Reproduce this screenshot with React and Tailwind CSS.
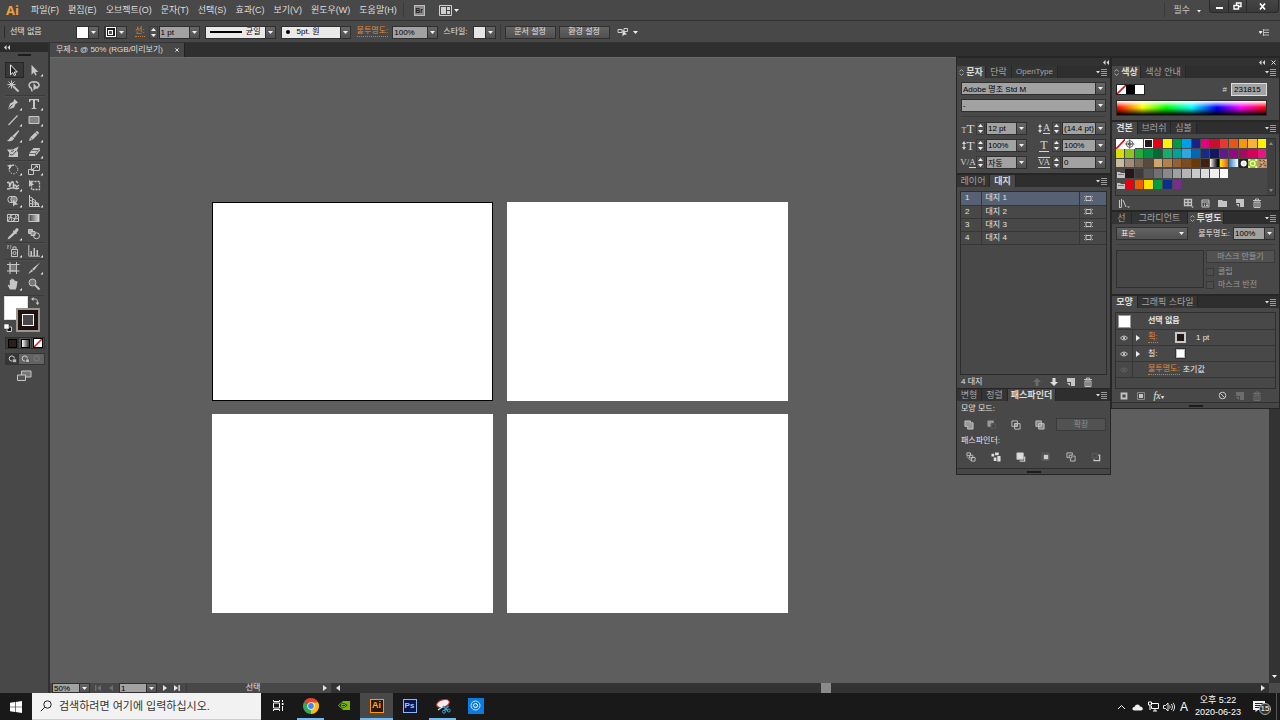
import React from "react";

const FONT = "font-['Liberation_Sans','Noto_Sans_CJK_KR',sans-serif]";

/* ---------- small building blocks ---------- */

function Svg({ w = 12, h = 12, box = "0 0 12 12", className = "", children }) {
  return (
    <svg width={w} height={h} viewBox={box} className={`shrink-0 ${className}`} fill="none" stroke="currentColor" strokeWidth="1" aria-hidden="true">
      {children}
    </svg>
  );
}

function Caret() {
  return (
    <svg width="5" height="3" viewBox="0 0 5 3" className="shrink-0" aria-hidden="true">
      <path d="M0 0h5L2.5 3z" fill="#f0f0f0" />
    </svg>
  );
}

function ArrowButton({ label }) {
  return (
    <button aria-label={label} className="flex w-[10px] shrink-0 items-center justify-center self-stretch border-l border-[#2f2f2f] bg-gradient-to-b from-[#666] to-[#505050]">
      <Caret />
    </button>
  );
}

function Combo({ label, value, width, spinner = false, tall = "h-[13px]" }) {
  return (
    <span className={`flex items-center gap-px ${width}`}>
      {spinner && (
        <button aria-label={`${label} 증감`} className={`flex w-[9px] shrink-0 flex-col items-center justify-center gap-[3px] border border-[#3a3a3a] bg-[#505050] ${tall}`}>
          <svg width="5" height="9" viewBox="0 0 5 9" aria-hidden="true">
            <path d="M0 3L2.5 0L5 3zM0 6L2.5 9L5 6z" fill="#eee" />
          </svg>
        </button>
      )}
      <span className={`flex min-w-0 flex-1 border border-[#2f2f2f] ${tall}`}>
        <input aria-label={label} defaultValue={value} className="min-w-0 flex-1 bg-[#a2a2a2] px-px text-[8px] leading-none text-black outline-none" />
        <ArrowButton label={`${label} 목록`} />
      </span>
    </span>
  );
}

function Tab({ children, active, width, grip }) {
  return (
    <button className={`flex items-center justify-center gap-[2px] whitespace-nowrap border-r border-[#262626] text-[9px] leading-none ${width} ${active ? "bg-[#484848] font-bold text-[#dcdcdc]" : "bg-[#343434] text-[#a4a4a4]"}`}>
      {grip && (
        <svg width="5" height="7" viewBox="0 0 5 7" fill="none" stroke="#c0c0c0" strokeWidth=".8" aria-hidden="true">
          <path d="M.5 2.400L2.500.6L4.500 2.400M.5 4.600L2.500 6.400L4.500 4.600" />
        </svg>
      )}
      {children}
    </button>
  );
}

function TabStrip({ children }) {
  return (
    <div className="flex h-[12px] items-stretch bg-[#2e2e2e]">
      {children}
      <button aria-label="패널 메뉴" className="ml-auto flex items-center pr-[3px] text-[#b5b5b5]">
        <Svg w={11} h={7} box="0 0 11 7">
          <path d="M0 2h4L2 4.500z" fill="#ddd" stroke="none" />
          <path d="M5 .5h6M5 2.500h6M5 4.500h6M5 6.500h6" stroke="#999" />
        </Svg>
      </button>
    </div>
  );
}

function Grip() {
  return (
    <div className="flex h-[6px] items-center justify-center border-t border-[#303030] bg-[#464646]">
      <span className="h-[2px] w-[14px] bg-[#1c1c1c]" />
    </div>
  );
}

function IconButton({ label, dim, width = "w-[17px]", children }) {
  return (
    <button aria-label={label} className={`flex shrink-0 items-center justify-center ${width} ${dim ? "text-[#6c6c6c]" : "text-[#c4c4c4]"}`}>
      {children}
    </button>
  );
}

function ChevronsLeft() {
  return (
    <svg width="6" height="5" viewBox="0 0 6 5" aria-hidden="true">
      <path d="M2.500 0v5L0 2.500zM6 0v5L3.500 2.500z" fill="#d8d8d8" />
    </svg>
  );
}

const NewIcon = () => (
  <Svg w={10} h={10} box="0 0 10 10">
    <path d="M1 1h8v8H5V5H1z" fill="currentColor" stroke="none" />
    <path d="M1 6h3v3z" fill="currentColor" stroke="none" />
  </Svg>
);
const TrashIcon = () => (
  <Svg w={10} h={10} box="0 0 10 10">
    <path d="M1 2.500h8M3.500 2V1h3v1M2 4h6v5.500H2zM4 4v5M6 4v5" />
  </Svg>
);
const NoneIcon = ({ size = "h-[9px] w-[9px]" }) => (
  <svg viewBox="0 0 9 9" preserveAspectRatio="none" className={`block shrink-0 bg-white ${size}`} aria-hidden="true">
    <path d="M0 9L9 0" stroke="#d8141c" strokeWidth="1.600" />
  </svg>
);

/* ---------- top bars ---------- */

const MENUS = ["파일(F)", "편집(E)", "오브젝트(O)", "문자(T)", "선택(S)", "효과(C)", "보기(V)", "윈도우(W)", "도움말(H)"];

function MenuBar() {
  return (
    <header className="flex h-[21px] shrink-0 items-center border-b border-[#333] bg-[#484848]">
      <span className="w-[31px] pl-[6px] font-['Open_Sans',sans-serif] text-[13px] font-bold leading-none text-[#f0a03c]">Ai</span>
      <nav className="flex gap-[9px]">
        {MENUS.map((m) => (
          <button key={m} className="whitespace-nowrap text-[9px] leading-none text-[#dedede]">{m}</button>
        ))}
      </nav>
      <span className="ml-[6px] h-[14px] w-px bg-[#3a3a3a]" />
      <button aria-label="Bridge" className="ml-[10px] flex h-[11px] w-[11px] items-center justify-center border border-[#bdbdbd] bg-[#8a8a8a] text-[7px] font-bold leading-none text-[#1c1c1c]">Br</button>
      <button aria-label="문서 정렬" className="ml-[14px] flex items-center gap-[2px] text-[#d0d0d0]">
        <Svg w={13} h={11} box="0 0 13 11">
          <path d="M.5.5h12v10H.5z" />
          <path d="M2 2h5v7H2zM8 2h3v3H8zM8 6h3v3H8z" fill="currentColor" stroke="none" />
        </Svg>
        <Caret />
      </button>
      <span className="ml-auto h-[14px] w-px bg-[#3a3a3a]" />
      <button className="ml-[8px] flex items-center gap-[7px] text-[9px] leading-none text-[#c4c4c4]">
        필수
        <Svg w={4} h={3} box="0 0 4 3" className="mt-[3px]"><path d="M0 0h4L2 2.500z" fill="#eee" stroke="none" /></Svg>
      </button>
      <div className="ml-[8px] mr-px flex h-[13px] self-start rounded-b-sm border border-t-0 border-[#2a2a2a] bg-gradient-to-b from-[#454545] to-[#3a3a3a] text-white">
        <button aria-label="최소화" className="flex w-[19px] items-center justify-center border-r border-[#2a2a2a]">
          <span className="mt-[3px] h-[2px] w-[7px] bg-white" />
        </button>
        <button aria-label="이전 크기로" className="flex w-[18px] items-center justify-center border-r border-[#2a2a2a]">
          <Svg w={9} h={8} box="0 0 9 8"><path d="M3.500 3V1h4.500v3.500H6M1 3.500h4.500V7H1z" strokeWidth="1.400" /></Svg>
        </button>
        <button aria-label="닫기" className="flex w-[31px] items-center justify-center">
          <Svg w={7} h={7} box="0 0 7 7"><path d="M1 .5l5 6M6 .5l-5 6" strokeWidth="1.700" /></Svg>
        </button>
      </div>
    </header>
  );
}

function SwatchButton({ label, stroke, light }) {
  return (
    <span className="flex h-[13px] w-[23px] shrink-0 border border-[#2f2f2f]">
      <button aria-label={label} className={`flex flex-1 items-center justify-center ${stroke ? "bg-[#3a3a3a]" : light ? "bg-[#e6e6e6]" : "bg-white"}`}>
        {stroke && (
          <span className="flex h-[10px] w-[10px] items-center justify-center border border-white bg-[#231815]">
            <span className="h-[5px] w-[5px] border border-white bg-[#555]" />
          </span>
        )}
      </button>
      <ArrowButton label={`${label} 목록`} />
    </span>
  );
}

const ORANGE = "border-b border-dotted border-[#c9813a] pb-px text-[8px] leading-none text-[#e08a3a] whitespace-nowrap";

function ControlBar() {
  return (
    <div className="flex h-[22px] shrink-0 items-center border-b border-[#333] bg-[#484848] pt-px text-[8px] leading-none text-[#e2e2e2]">
      <span className="ml-[4px] h-[12px] w-px bg-[#2c2c2c]" />
      <span className="ml-[5px] w-[66px] whitespace-nowrap">선택 없음</span>
      <SwatchButton label="칠" />
      <span className="w-[5px]" />
      <SwatchButton label="획" stroke />
      <button className={`ml-[8px] ${ORANGE}`}>선:</button>
      <span className="w-[4px]" />
      <Combo label="선 두께" value="1 pt" width="w-[51px]" spinner />
      <span className="ml-[5px] flex h-[13px] w-[71px] border border-[#2f2f2f]">
        <button aria-label="폭 프로필" className="flex flex-1 items-center gap-[4px] bg-[#e9e9e9] px-[4px] text-black">
          <span className="h-[2px] flex-1 bg-black" />
          <span>균일</span>
        </button>
        <ArrowButton label="폭 프로필 목록" />
      </span>
      <span className="ml-[5px] flex h-[13px] w-[70px] border border-[#2f2f2f]">
        <button aria-label="브러쉬 정의" className="flex flex-1 items-center gap-[7px] bg-[#e9e9e9] px-[4px] text-black">
          <span className="h-[4px] w-[4px] rounded-full bg-black" />
          <span>5pt. 원</span>
        </button>
        <ArrowButton label="브러쉬 목록" />
      </span>
      <button className={`ml-[6px] ${ORANGE}`}>불투명도:</button>
      <span className="w-[4px]" />
      <Combo label="불투명도" value="100%" width="w-[46px]" />
      <span className="mx-[5px] whitespace-nowrap">스타일:</span>
      <SwatchButton label="스타일" light />
      <span className="ml-[4px] h-[16px] w-px bg-[#3a3a3a]" />
      <button className="ml-[4px] h-[13px] w-[51px] border border-[#303030] bg-gradient-to-b from-[#646464] to-[#505050]">문서 설정</button>
      <button className="ml-[3px] h-[13px] w-[51px] border border-[#303030] bg-gradient-to-b from-[#646464] to-[#505050]">환경 설정</button>
      <button aria-label="유사 오브젝트 선택" className="ml-[7px] flex items-center gap-[4px] text-[#cfcfcf]">
        <Svg w={12} h={10} box="0 0 12 10">
          <path d="M1 2.500h4v3H1zM7 1.500h3.500v3H7z" />
          <path d="M5.500 2.500v7l1.700-1.700 2.800-.3z" fill="#ddd" stroke="none" />
        </Svg>
        <Caret />
      </button>
      <button aria-label="컨트롤 메뉴" className="ml-auto mr-[11px]">
        <Svg w={10} h={7} box="0 0 10 7">
          <path d="M0 2.500h3L1.500 4.500z" fill="#ddd" />
          <path d="M4.500 0v7M4 1h6M4 3.500h6M4 6h6" stroke="#bbb" />
        </Svg>
      </button>
    </div>
  );
}

/* ---------- tools ---------- */

const F = { fill: "currentColor", stroke: "none" };
const TOOLS = [
  [
    ["선택", <path key="a" d="M3.500.8v10l2.300-2.200 1.500 3 1.400-.7-1.400-2.900h3z" fill="#222" stroke="#e8e8e8" />, false],
    ["직접 선택", <path key="a" d="M3.500.8v10l2.300-2.200 1.500 3 1.400-.7-1.400-2.900h3z" {...F} />, true],
    ["자동 선택", <g key="a"><path d="M6 6l5.500 5.500" strokeWidth="2" /><path d="M4.500.5v8M.5 4.500h8M1.500 1.500l6 6M7.500 1.500l-6 6" /></g>, false],
    ["올가미", <g key="a"><path d="M3.500 8C0 7 0 2 6 1.800c5.500 0 6.500 4.500 3 5.700M3.500 7.500c-1 1.500 1 2 .2 4" strokeWidth="1.500" /><path d="M5.500 3v7.500l2-1.800 2.800-.2z" {...F} /></g>, false],
  ],
  [
    ["펜", <g key="a"><path d="M7.500 1l3.500 3.500-2.500 1.500-1.500 3.500-6 2 2-6L6.300 3.700z" {...F} /><path d="M1.500 11L5.500 6.500" stroke="#444" /></g>, true],
    ["문자", <path key="a" d="M1 1h10v3H9.800L9.400 2.200H7v7.600l1.400.5v.7H3.600v-.7L5 9.800V2.200H2.600L2.200 4H1z" {...F} />, true],
    ["선분", <path key="a" d="M1.500 11L10.500 1.500" strokeWidth="1.200" />, true],
    ["사각형", <path key="a" d="M1 2.500h10v7H1z" fill="#858585" />, true],
    ["페인트브러쉬", <path key="a" d="M11.500.2L12.300 1 7.500 7.700 5.300 6zM4.800 6.300l2.400 2C6 11.300 2.500 11.800 0 10.700 2.500 10 2.700 7.300 4.800 6.300z" {...F} />, true],
    ["연필", <g key="a"><path d="M9 .8l2.200 2.200-6.500 6.800L1 11l1-3.500z" {...F} /><path d="M2.200 7.600l2.300 2.200M7.500 2.300l2.200 2.200" stroke="#444" strokeWidth=".8" /></g>, true],
    ["물방울 브러쉬", <g key="a"><path d="M0 3.500h5.500L11.800.5 9.500 5.500H11V11H1.500L2.500 7z" {...F} /><path d="M3 8.500c2.500 1 4-.5 6-3.500M4 5c1 1 2 0 3-1" stroke="#444" /></g>, false],
    ["지우개", <g key="a"><path d="M5.500 2H12v2.500L7.500 10H1V7.500z" {...F} /><path d="M1 7.500h6.500L12 2.500M7.500 7.500V10M4 4.500h6" stroke="#555" strokeWidth=".8" /></g>, true],
  ],
  [
    ["회전", <g key="a"><circle cx="6.500" cy="6.500" r="4.300" strokeDasharray="1.500 1.200" /><path d="M2.200 6.500A4.300 4.300 0 0 1 7 2.200" strokeWidth="1.300" /><path d="M0 2.500l4-1v4z" {...F} /></g>, true],
    ["크기 조절", <g key="a"><path d="M3.500 1.500h8v6h-8zM.5 6.500h5v5h-5z" /><path d="M5 6l4-3M7 3h2.500v2" /></g>, true],
    ["폭", <path key="a" d="M0 4c2-2 3 1 2.500 4C4 5 4 2 6 3c1 1 0 3 .5 5C8 5 9 6 9.500 8L12 6M0 10c4 0 5-2 7-1s3 1 5 0M9 2l2 2" strokeWidth="1.500" />, true],
    ["자유 변형", <g key="a"><rect x="3.500" y="2.500" width="8" height="8" strokeDasharray="2 1" strokeWidth="1.300" /><path d="M1 .5v7.500l2-1.800 3-.2z" {...F} /></g>, false],
    ["도형 구성", <g key="a"><circle cx="4" cy="4.500" r="3.200" /><circle cx="7" cy="4.500" r="3.200" fill="#888" /><path d="M6 4.500v7l2-1.800 3-.2z" {...F} /></g>, true],
    ["원근감 격자", <path key="a" d="M1.500 0v11.500H12M1.500 2l3 1v8M4.500 4l3 1.500v6M7.500 7l3 1.500v3M1.500 5l9 4M1.500 8.500l9 1" />, true],
  ],
  [
    ["망", <path key="a" d="M.5 2.500h11v7H.5zM.5 6c3-3 7 3 11 0M4 2.500c-2 3 2 4 0 7M8 2.500c2 3-2 4 0 7M1 9l4-6M6 9l5-6" />, false],
    ["그라디언트", <rect key="a" x="1" y="2.500" width="10" height="7" fill="url(#toolGrad)" />, false],
    ["스포이드", <path key="a" d="M9 .5c2-1 3.500 1 2 2.500L9.500 4.500l.5.8-1 1-.7-.6L3 10.500l-2.500 1 1-2.500L6.500 3.900l-.7-.7 1-1 .8.600z" {...F} />, true],
    ["블렌드", <g key="a"><path d="M.5 1.500h4v4h-4z" fill="#aaa" /><path d="M3 3.500h4v4H3z" fill="#888" /><circle cx="8.500" cy="7.800" r="3" /></g>, false],
  ],
  [
    ["심볼 분무기", <g key="a"><path d="M4.500 4.500h6v7h-6zM6 4V2h3v2" /><circle cx="7.500" cy="8" r="1.500" /><path d="M0 1h2M3 1h1.500M0 3h1.500M3 3h1" /></g>, true],
    ["그래프", <path key="a" d="M.8 0v11.200H12" />, true],
  ],
  [
    ["대지", <g key="a"><path d="M3 2.500h6.500V9H3z" fill="#777" /><path d="M3 0v12M9.500 0v12M0 2.500h12.500M0 9h12.500" /></g>, false],
    ["분할 영역", <path key="a" d="M12 .5L6 8.500 4 7zM3.500 7.500l1.800 1.500L0 12z" {...F} />, true],
    ["손", <path key="a" d="M3 11.500L.8 7.500c0-1 1.200-.8 2 .2V2.300c.3-.8 1.200-.8 1.400 0V1c.3-.8 1.300-.8 1.500 0v.8c.3-.8 1.300-.7 1.500.2v1c.4-.7 1.400-.5 1.500.3l1-.3c.8.2.9.8.7 1.500L9.500 9.500l-.8 2z" {...F} />, true],
    ["돋보기", <g key="a"><circle cx="4.500" cy="4.500" r="3.500" fill="#777" /><path d="M7 7l4.500 4.500" strokeWidth="2" /></g>, false],
  ],
];

function Toolbar() {
  return (
    <aside className="flex w-[50px] shrink-0 flex-col border-r-2 border-[#303030] bg-[#484848] text-[#c6c6c6]">
      <div className="flex h-[9px] items-center bg-[#2b2b2b] pl-[4px]"><ChevronsLeft /></div>
      <div className="flex h-[10px] items-start justify-center pt-[2px]"><span className="h-[2px] w-[13px] bg-[#1c1c1c]" /></div>
      <svg width="0" height="0" className="absolute" aria-hidden="true">
        <linearGradient id="toolGrad"><stop offset="0" stopColor="#444" /><stop offset="1" stopColor="#ddd" /></linearGradient>
      </svg>
      {TOOLS.map((group, gi) => (
        <div key={gi} className={`ml-[5px] mr-[3px] grid grid-cols-2 gap-x-[2px] ${gi ? "border-t border-[#3a3a3a] shadow-[inset_0_1px_0_#4f4f4f]" : "pb-px"}`}>
          {group.map(([name, art, more]) => (
            <button key={name} aria-label={name} className={`flex h-[16px] items-center justify-center ${name === "선택" ? "border border-[#262626] bg-[#383838]" : ""}`}>
              <Svg w={15} h={14} box="0 -1 15 14">
                {art}
                {name === "그래프" && <path d="M2.500 6h1.500v5H2.500zM5.500 3H7v8H5.500zM8.500 5H10v6H8.500z" fill="currentColor" stroke="none" />}
                {more && <path d="M15 10v2.500h-2.500z" fill="#eee" stroke="none" />}
              </Svg>
            </button>
          ))}
        </div>
      ))}
      <div className="mx-[4px] mt-[3px] grid h-[37px] grid-cols-[12px_12px_14px] grid-rows-[12px_12px_12px] border-t border-[#3a3a3a]">
        <button aria-label="칠 색상" className="col-span-2 col-start-1 row-span-2 row-start-1 border border-[#ddd] bg-white" />
        <button aria-label="획 색상" className="col-span-2 col-start-2 row-span-2 row-start-2 flex h-[24px] w-[24px] items-center justify-center border-2 border-[#9a9591] bg-[#1e1210]">
          <span className="h-[12px] w-[12px] border border-white bg-[#484848]" />
        </button>
        <button aria-label="칠과 획 교체" className="col-start-3 row-start-1 flex items-start justify-center pt-px">
          <Svg w={8} h={8} box="0 0 8 8"><path d="M1.500 2H4c2 0 2.500 1 2.500 4" /><path d="M0 2l2.500-2v4zM4.500 5.500h4L6.500 8z" {...F} /></Svg>
        </button>
        <button aria-label="초기값 칠과 획" className="col-start-1 row-start-3 flex items-end">
          <Svg w={8} h={8} box="0 0 8 8"><path d="M3 3h4.500v4.500H3z" fill="#111" stroke="#ccc" /><path d="M0 0h5v5H0z" fill="#fff" stroke="#222" strokeWidth=".5" /></Svg>
        </button>
      </div>
      <div className="ml-[5px] mt-[5px] flex h-[12px] w-[40px] border border-[#303030]">
        <button aria-label="색상" className="flex flex-1 items-center justify-center bg-[#3a3a3a]"><span className="h-[9px] w-[9px] border border-black bg-[#2b1f1d]" /></button>
        <button aria-label="그라디언트 모드" className="flex flex-1 items-center justify-center border-x border-[#303030] bg-[#505050]"><span className="h-[9px] w-[9px] border border-black bg-gradient-to-r from-white to-[#333]" /></button>
        <button aria-label="없음" className="flex flex-1 items-center justify-center bg-[#505050]"><span className="border border-black"><NoneIcon size="h-[8px] w-[8px]" /></span></button>
      </div>
      <div className="ml-[5px] mt-[4px] flex h-[12px] w-[40px] border border-[#353535]">
        {["표준 그리기", "배경 그리기", "내부 그리기"].map((n, i) => (
          <button key={n} aria-label={n} className={`flex flex-1 items-center justify-center ${i === 0 ? "bg-[#363636]" : "bg-[#636363]"} ${i === 2 ? "text-[#7c7c7c]" : "text-[#d0d0d0]"}`}>
            <Svg w={9} h={8} box="0 0 9 8"><circle cx="3.800" cy="3.500" r="2.600" />{i < 2 && <path d="M4.500 4h4v3.500h-4z" fill="#bbb" stroke="#333" strokeWidth=".6" />}</Svg>
          </button>
        ))}
      </div>
      <button aria-label="화면 모드 변경" className="mx-auto mt-[5px]">
        <Svg w={15} h={12} box="0 0 15 12"><path d="M4.500 1h9.500v6H4.500z" fill="#777" /><path d="M.5 5h8v5.500h-8z" fill="#555" /></Svg>
      </button>
    </aside>
  );
}

/* ---------- left floating column ---------- */

const SpinRow = ({ icon, label, value, width }) => (
  <div className="flex items-center justify-between">
    <span className="flex w-[14px] items-center justify-center text-[#d6d6d6]">{icon}</span>
    <Combo label={label} value={value} width={width} spinner />
  </div>
);

const UpDown = () => (
  <Svg w={4} h={9} box="0 0 4 9"><path d="M2 2v5" /><path d="M0 3L2 0l2 3zM0 6l2 3 2-3z" fill="currentColor" stroke="none" /></Svg>
);

const serif = "font-['Liberation_Serif',serif] leading-none";
const CHAR_ROWS = [
  ["글꼴 크기", "12 pt", <span key="i" className={`${serif} flex items-baseline text-[13px]`}><span className="text-[8px]">T</span>T</span>,
    "행간", "(14.4 pt)", <span key="j" className={`${serif} flex items-center gap-px text-[10px]`}><UpDown /><span className="border-b border-current">A</span></span>],
  ["세로 비율", "100%", <span key="i" className={`${serif} flex items-center gap-px text-[13px]`}><UpDown />T</span>,
    "가로 비율", "100%", <span key="j" className={`${serif} border-b border-current px-px text-[12px]`}>T</span>],
  ["커닝", "자동", <span key="i" className={`${serif} flex items-center text-[9px]`}>V/<span className="border-b border-current">A</span></span>,
    "자간", "0", <span key="j" className={`${serif} border-y border-current text-[9px]`}>VA</span>],
];

const boardIcon = (
  <Svg w={9} h={7} box="0 0 9 7"><path d="M2 1.500h5v4H2z" stroke="#c8c8c8" /><path d="M0 1.500h1M8 1.500h1M0 5.500h1M8 5.500h1M2 0v.5M7 0v.5M2 6.500V7M7 6.500V7" stroke="#aaa" /></Svg>
);

const MODES = [
  ["합치기", <path key="p" d="M1 1h6v2h3v7H4V7H1z" fill="#999" />],
  ["앞면 오브젝트 제외", <g key="p"><path d="M1 1h6v2H4v4H1z" fill="#999" stroke="#999" /><path d="M4.500 4.500H9.500v5H4.500z" stroke="#5c5c5c" /></g>],
  ["교차 영역", <g key="p"><path d="M1 1h6v6H1zM4 4h6v6H4z" /><path d="M4 4h3v3H4z" fill="#888" /></g>],
  ["교차 영역 제외", <g key="p"><path d="M1 1h6v6H1zM4 4h6v6H4z" fill="#888" /><path d="M4.500 4.500h2v2h-2z" fill="#222" /></g>],
];
const FINDERS = [
  ["나누기", <path key="p" d="M1 1h4v3H1zM4 3.500h3.500v3H4zM6 6h4v4H6zM1 5l5 5" />],
  ["동색 오브젝트 나누기", <g key="p" {...F}><path d="M.5 2h3v3h-3zM4.500.5h4v3h-4zM3 6h3v4H3zM7 4.500h3.500v6H7z" fill="#ddd" /></g>],
  ["병합", <g key="p"><path d="M1 1h7v7H1z" fill="#ddd" /><path d="M9.500 5v5H4" strokeWidth="1.500" /></g>],
  ["자르기", <g key="p"><path d="M1 1h8v8H1z" strokeDasharray="1 1" stroke="#777" /><path d="M3 3h5v5H3z" fill="#ccc" stroke="none" /></g>],
  ["윤곽선", <g key="p"><path d="M1 1h6v2.500M1 1v5h2M3.500 3.500h3v3h-3zM7.500 4.500H10V10H5V7.500" /></g>],
  ["이면 오브젝트 제외", <g key="p"><path d="M1.500 1.500h5v5h-5z" stroke="#606060" /><path d="M8 3.500h1.500V9.500H3.500V8" strokeWidth="1.500" /></g>],
];

function LeftPanels() {
  return (
    <section className="flex w-[155px] flex-col border border-t-2 border-[#262626] bg-[#484848]">
      <div className="flex h-[8px] items-center justify-end bg-[#323232] pr-px"><ChevronsLeft /></div>
      <TabStrip>
        <Tab active grip width="w-[29px]">문자</Tab>
        <Tab width="w-[26px]">단락</Tab>
        <Tab width="w-[46px]"><span className="text-[8px]">OpenType</span></Tab>
      </TabStrip>
      <div className="flex flex-col px-[4px] pb-[4px] pt-[4px]">
        <Combo label="글꼴" value="Adobe 명조 Std M" width="w-full" />
        <span className="h-[4px]" />
        <Combo label="글꼴 스타일" value="-" width="w-full" />
        <span className="mb-[5px] mt-[4px] h-px bg-[#3c3c3c]" />
        <div className="grid grid-cols-[66px_69px] justify-between gap-y-[4px]">
          {CHAR_ROWS.map(([l1, v1, i1, l2, v2, i2]) => (
            <React.Fragment key={l1}>
              <SpinRow icon={i1} label={l1} value={v1} width="w-[51px]" />
              <SpinRow icon={i2} label={l2} value={v2} width="w-[54px]" />
            </React.Fragment>
          ))}
        </div>
      </div>
      <div className="border-t-2 border-[#262626]">
        <TabStrip>
          <Tab width="w-[33px]">레이어</Tab>
          <Tab active width="w-[26px]">대지</Tab>
        </TabStrip>
      </div>
      <div className="mx-[3px] mt-[4px] h-[184px] border border-[#2c2c2c]">
        <table className="w-full table-fixed border-collapse text-[8px] leading-none text-[#e4e4e4]">
          <tbody>
            {[1, 2, 3, 4].map((n) => (
              <tr key={n} className={`h-[13px] border-b border-[#363636] ${n === 1 ? "bg-[#566273]" : ""}`}>
                <td className="w-[20px] border-r border-[#363636] p-0 pl-[4px]">{n}</td>
                <td className="p-0 pl-[4px]">대지 {n}</td>
                <td className="w-[27px] border-l border-[#363636] p-0 pl-[4px]">{boardIcon}</td>
              </tr>
            ))}
          </tbody>
        </table>
      </div>
      <div className="flex h-[13px] items-center pl-[4px] pr-[14px] text-[8px] leading-none text-[#e4e4e4]">
        <span className="mr-auto">4 대지</span>
        <IconButton label="위로 이동" dim><Svg w={8} h={8} box="0 0 8 8"><path d="M4 0l4 4H5.500v4h-3V4H0z" {...F} /></Svg></IconButton>
        <IconButton label="아래로 이동"><Svg w={8} h={8} box="0 0 8 8"><path d="M4 8L0 4h2.500V0h3v4H8z" fill="#ddd" stroke="none" /></Svg></IconButton>
        <IconButton label="새 대지"><NewIcon /></IconButton>
        <IconButton label="대지 삭제"><TrashIcon /></IconButton>
      </div>
      <div className="border-t border-[#262626]">
        <TabStrip>
          <Tab width="w-[25px]">변형</Tab>
          <Tab width="w-[26px]">정렬</Tab>
          <Tab active width="w-[48px]">패스파인더</Tab>
        </TabStrip>
      </div>
      <div className="px-[4px] pt-[4px] text-[8px] leading-none text-[#e4e4e4]">
        <div className="h-[9px]">모양 모드:</div>
        <div className="mt-[4px] flex h-[13px] items-center">
          {MODES.map(([n, art], i) => (
            <IconButton key={n} label={n} width={i === 0 ? "w-[15px]" : "ml-[8px] w-[16px]"}><Svg w={10} h={10} box="0 0 11 11">{art}</Svg></IconButton>
          ))}
          <button className="ml-auto h-[13px] w-[50px] border border-[#3a3a3a] bg-[#525252] text-[#8e8e8e]">확장</button>
        </div>
        <div className="mt-[6px] h-[9px]">패스파인더:</div>
        <div className="mt-[5px] flex h-[12px] items-center justify-between">
          {FINDERS.map(([n, art]) => (
            <IconButton key={n} label={n} width="w-[20px]"><Svg w={10} h={10} box="0 0 11 11">{art}</Svg></IconButton>
          ))}
        </div>
      </div>
      <div className="mt-[5px]"><Grip /></div>
    </section>
  );
}

/* ---------- right floating column ---------- */

const SW1 = ["bg-white", "bg-[#231815]", "bg-[#e60012]", "bg-[#fff100]", "bg-[#009944]", "bg-[#00a0e9]", "bg-[#1d2088]", "bg-[#e4007f]", "bg-[#c7102e]", "bg-[#e8382f]", "bg-[#ea5514]", "bg-[#f39800]", "bg-[#f9b233]", "bg-[#fff000]"];
const SW2 = ["bg-[#dadf00]", "bg-[#8fc31f]", "bg-[#22ac38]", "bg-[#009140]", "bg-[#006934]", "bg-[#13ae67]", "bg-[#00a29a]", "bg-[#2ea7e0]", "bg-[#0068b7]", "bg-[#172a88]", "bg-[#13175c]", "bg-[#601986]", "bg-[#920783]", "bg-[#a40b5d]", "bg-[#d7005b]", "bg-[#e5177e]"];
const SW3 = ["bg-[#c9bc9c]", "bg-[#a48b78]", "bg-[#7a6a56]", "bg-[#594a40]", "bg-[#cfa56a]", "bg-[#b28147]", "bg-[#956134]", "bg-[#7b4c1f]", "bg-[#6a3906]", "bg-[#40210f]", "bg-gradient-to-r from-white to-black", "bg-gradient-to-r from-[#f5e800] to-[#e8541c]", "bg-gradient-to-r from-[#1b7fc4] to-white"];
const SW4 = ["bg-[#231815]", "bg-[#3e3a39]", "bg-[#595757]", "bg-[#727171]", "bg-[#898989]", "bg-[#9fa0a0]", "bg-[#b5b5b6]", "bg-[#c9caca]", "bg-[#dcdddd]", "bg-[#efefef]", "bg-[#fafafa]"];
const SW5 = ["bg-[#e60012]", "bg-[#eb6100]", "bg-[#ffe100]", "bg-[#009e41]", "bg-[#0a2f8f]", "bg-[#7b2d8b]"];

const Cell = ({ color, ring }) => <button aria-label="색상 견본" className={`h-full w-full border-b border-r border-[#484848] ${color} ${ring ? "ring-1 ring-inset ring-white" : ""}`} />;
const Folder = () => (
  <span className="flex items-center justify-center text-[#c4c4c4]">
    <Svg w={8} h={7} box="0 0 8 7"><path d="M0 1h3l1 1h4v5H0z" {...F} /><path d="M1 3.500h6" stroke="#777" /></Svg>
  </span>
);
const ROW = "grid h-[10px] grid-cols-16";

function ColorPanel() {
  return (
    <div className="px-[4px] pb-[4px] pt-[5px]">
      <div className="flex h-[13px] items-center">
        <span className="flex border border-[#222]"><NoneIcon size="h-[9px] w-[9px]" /><span className="h-[9px] w-[9px] bg-black" /><span className="h-[9px] w-[9px] bg-white" /></span>
        <label className="ml-auto mr-[8px] flex items-center gap-[4px] text-[8px] leading-none text-[#ddd]">
          #
          <input defaultValue="231815" className="h-[13px] w-[36px] border border-[#ddd] bg-[#a2a2a2] px-[2px] text-[8px] leading-none text-black outline-none" />
        </label>
      </div>
      <div className="mr-[8px] mt-[4px] h-[16px] border border-[#2c2c2c] bg-[linear-gradient(to_bottom,white,transparent_45%,transparent_50%,black),linear-gradient(to_right,red,yellow_17%,lime_33%,cyan_50%,blue_67%,magenta_83%,red)]" />
    </div>
  );
}

function SwatchPanel() {
  return (
    <div className="px-[3px] pb-px pt-[4px]">
      <div className="flex h-[58px] border border-[#303030]">
        <div className="w-[151px]">
          <div className={ROW}>
            <NoneIcon size="h-full w-full" />
            <svg viewBox="0 0 9 9" className="h-full w-full bg-white" fill="none" stroke="#333" strokeWidth=".7"><circle cx="4.500" cy="4.500" r="3.200" /><circle cx="4.500" cy="4.500" r="1.300" /><path d="M4.500 0v9M0 4.500h9" /></svg>
            {SW1.map((c, i) => <Cell key={c} color={c} ring={i === 1} />)}
          </div>
          <div className={ROW}>{SW2.map((c) => <Cell key={c} color={c} />)}</div>
          <div className="grid h-[9px] grid-cols-16">
            {SW3.map((c) => <Cell key={c} color={c} />)}
            <svg viewBox="0 0 9 9" className="h-full w-full bg-[#222]"><circle cx="4.500" cy="4.500" r="3" fill="#fff" /><circle cx="4.500" cy="4.500" r="1.500" fill="#ddd" /></svg>
            <svg viewBox="0 0 9 9" className="h-full w-full bg-[#8fc31f]"><circle cx="4.500" cy="4.500" r="2.300" fill="none" stroke="#f3f6c0" strokeWidth="1.500" /><path d="M0 0h2v2H0zM7 0h2v2H7zM0 7h2v2H0zM7 7h2v2H7z" fill="#eef0b0" /></svg>
            <svg viewBox="0 0 9 9" className="h-full w-full bg-[#b8906c]"><path d="M1 1l2 1M5 1l2 2M2 5l2 1M6 6l2 1M1 8l2-1M5 4l1 1" stroke="#6b4020" /><path d="M3 3l1 1M7 1l1 1M4 7l1 1" stroke="#ecd9c0" /></svg>
          </div>
          <div className={`${ROW} mt-px`}><Folder />{SW4.map((c) => <Cell key={c} color={c} />)}</div>
          <div className={`${ROW} mt-px`}><Folder />{SW5.map((c) => <Cell key={c} color={c} />)}</div>
        </div>
        <div className="flex flex-1 flex-col items-center justify-between bg-[#404040] py-[3px]">
          <Svg w={4} h={3} box="0 0 4 3"><path d="M0 3h4L2 0z" fill="#8a8a8a" stroke="none" /></Svg>
          <Svg w={4} h={3} box="0 0 4 3"><path d="M0 0h4L2 3z" fill="#8a8a8a" stroke="none" /></Svg>
        </div>
      </div>
      <div className="mt-px flex h-[12px] items-center pr-[11px]">
        <IconButton label="견본 라이브러리"><Svg w={12} h={10} box="0 0 12 10"><path d="M1.500 2v7.500M3.500 1v8.500M5 2l3 7M1 9.500h2" /><path d="M9 8.500h3L10.500 10z" {...F} /></Svg></IconButton>
        <span className="flex-1" />
        <IconButton label="견본 종류"><Svg w={12} h={10} box="0 0 12 10"><path d="M1.500 1.500h7v6h-7zM1.500 4.500h7M5 1.500v6" strokeWidth="1.300" /><path d="M8 8.500h3L9.500 10z" {...F} /></Svg></IconButton>
        <IconButton label="견본 옵션"><Svg w={9} h={9} box="0 0 9 9"><path d="M1 1h7v7H1zM1 3h7M3 5h1M5 5h2M3 6.500h1M5 6.500h2" /></Svg></IconButton>
        <IconButton label="새 색상 그룹"><Svg w={10} h={8} box="0 0 10 8"><path d="M0 1h4l1 1h4v6H0z" {...F} /></Svg></IconButton>
        <IconButton label="새 견본"><NewIcon /></IconButton>
        <IconButton label="견본 삭제"><TrashIcon /></IconButton>
      </div>
    </div>
  );
}

function TransparencyPanel() {
  return (
    <div className="px-[4px] pb-[5px] pt-[3px] text-[8px] leading-none text-[#e4e4e4]">
      <div className="flex items-center justify-between">
        <span className="grid h-[13px] w-[72px] items-center border border-[#303030] bg-gradient-to-b from-[#646464] to-[#505050]">
          <select aria-label="혼합 모드" className="col-start-1 row-start-1 h-full w-full appearance-none bg-transparent pl-[4px] text-[8px] leading-none outline-none"><option>표준</option></select>
          <span className="pointer-events-none col-start-1 row-start-1 justify-self-end pr-[3px]"><Caret /></span>
        </span>
        <span className="flex items-center gap-[3px]">
          <span className="whitespace-nowrap">불투명도:</span>
          <Combo label="투명도 불투명도" value="100%" width="w-[42px]" />
        </span>
      </div>
      <div className="mt-[4px] h-px bg-[#3c3c3c]" />
      <div className="mt-[5px] flex justify-between">
        <div className="h-[38px] w-[88px] border border-[#303030] bg-[#464646]" />
        <div className="flex w-[69px] flex-col text-[#9a9a9a]">
          <button className="h-[13px] border border-[#3a3a3a] bg-[#525252]">마스크 만들기</button>
          {["클립", "마스크 반전"].map((t) => (
            <label key={t} className="mt-[4px] flex h-[9px] items-center gap-[4px]">
              <input type="checkbox" disabled className="h-[8px] w-[8px] appearance-none border border-[#383838] bg-[#4c4c4c]" />
              {t}
            </label>
          ))}
        </div>
      </div>
    </div>
  );
}

const Eye = ({ dim }) => (
  <button aria-label="표시" className={`flex w-[17px] items-center justify-center self-stretch border-r border-[#363636] ${dim ? "text-[#606060]" : "text-[#c4c4c4]"}`}>
    <Svg w={8} h={6} box="0 0 8 6"><path d="M.5 3C2 .5 6 .5 7.500 3 6 5.500 2 5.500.5 3z" /><circle cx="4" cy="3" r="1.200" fill="currentColor" stroke="none" /></Svg>
  </button>
);
const Play = () => (
  <svg width="4" height="6" viewBox="0 0 4 6" className="ml-[3px] shrink-0" aria-hidden="true"><path d="M0 0v6l4-3z" fill="#eee" /></svg>
);

function AppearancePanel() {
  const row = "flex h-[16px] items-center border-b border-[#363636]";
  return (
    <div className="px-[3px] pt-[4px] text-[8px] leading-none text-[#e8e8e8]">
      <div className="h-[77px] border border-[#303030]">
        <div className="flex h-[17px] items-center border-b border-[#363636] font-bold">
          <span className="ml-[2px] h-[13px] w-[13px] border border-[#999] bg-white" />
          <span className="ml-[17px]">선택 없음</span>
        </div>
        <div className={row}>
          <Eye /><Play />
          <span className="ml-[8px] flex w-[27px]"><button className={ORANGE}>획:</button></span>
          <span className="h-[11px] w-[11px] border-2 border-[#c8c8c8] bg-[#231815]" />
          <span className="ml-[10px]">1 pt</span>
        </div>
        <div className={row}>
          <Eye /><Play />
          <span className="ml-[8px] w-[27px]">칠:</span>
          <span className="h-[11px] w-[11px] border border-[#333] bg-white ring-1 ring-inset ring-[#bbb]" />
        </div>
        <div className={row}>
          <Eye dim />
          <button className={`ml-[15px] ${ORANGE}`}>불투명도:</button>
          <span className="ml-[3px]">초기값</span>
        </div>
      </div>
      <div className="flex h-[13px] items-center pr-[11px]">
        <IconButton label="새 획 추가"><Svg w={8} h={8} box="0 0 8 8"><path d="M1.500 1.500h5v5h-5z" strokeWidth="1.800" /></Svg></IconButton>
        <IconButton label="새 칠 추가"><Svg w={8} h={8} box="0 0 8 8"><path d="M.5.5h7v7h-7z" stroke="#888" /><path d="M2 2h4v4H2z" {...F} /></Svg></IconButton>
        <button className="ml-px w-[17px] font-['Liberation_Serif',serif] text-[10px] italic leading-none">fx<span className="text-[6px] not-italic">▾</span></button>
        <span className="flex-1" />
        <IconButton label="모양 지우기"><Svg w={9} h={9} box="0 0 9 9"><circle cx="4.500" cy="4.500" r="3.300" /><path d="M2.200 2.200l4.600 4.600" /></Svg></IconButton>
        <IconButton label="항목 복제" dim><NewIcon /></IconButton>
        <IconButton label="항목 삭제" dim><TrashIcon /></IconButton>
      </div>
    </div>
  );
}

function RightPanels() {
  return (
    <section className="flex w-[169px] flex-col border border-t-2 border-[#262626] bg-[#484848]">
      <div className="flex h-[8px] items-center justify-end gap-[6px] bg-[#323232] pr-[3px]">
        <ChevronsLeft />
        <Svg w={5} h={5} box="0 0 5 5"><path d="M.5.5l4 4M4.500.5l-4 4" stroke="#ddd" /></Svg>
      </div>
      <TabStrip>
        <Tab active grip width="w-[29px]">색상</Tab>
        <Tab width="w-[45px]">색상 안내</Tab>
      </TabStrip>
      <ColorPanel />
      <div className="border-t-2 border-[#262626]">
        <TabStrip>
          <Tab active width="w-[26px]">견본</Tab>
          <Tab width="w-[33px]">브러쉬</Tab>
          <Tab width="w-[26px]">심볼</Tab>
        </TabStrip>
      </div>
      <SwatchPanel />
      <div className="border-t-2 border-[#262626]">
        <TabStrip>
          <Tab width="w-[20px]">선</Tab>
          <Tab width="w-[56px]">그라디언트</Tab>
          <Tab active grip width="w-[36px]">투명도</Tab>
        </TabStrip>
      </div>
      <TransparencyPanel />
      <div className="border-t-2 border-[#262626]">
        <TabStrip>
          <Tab active width="w-[26px]">모양</Tab>
          <Tab width="w-[60px]">그래픽 스타일</Tab>
        </TabStrip>
      </div>
      <AppearancePanel />
      <Grip />
    </section>
  );
}

/* ---------- document area ---------- */

const Tri = ({ dir, dim, bar }) => (
  <svg width="7" height="6" viewBox="0 0 7 6" fill={dim ? "#6e6e6e" : "#e4e4e4"} aria-hidden="true">
    {dir === "l" ? <path d="M6 0v6L2 3z" /> : <path d="M1 0v6l4-3z" />}
    {bar && (dir === "l" ? <path d="M0 0h1.300v6H0z" /> : <path d="M5.500 0h1.300v6H5.500z" />)}
  </svg>
);

function StatusBar() {
  return (
    <div className="flex h-[10px] shrink-0 items-center bg-[#484848] text-[8px] leading-none text-[#e4e4e4]">
      <span className="w-[2px]" />
      <Combo label="확대/축소" value="50%" width="w-[38px]" tall="h-[10px]" />
      <div className="ml-[5px] flex w-[24px] items-center gap-[5px]"><button aria-label="처음"><Tri dir="l" dim bar /></button><button aria-label="이전"><Tri dir="l" dim /></button></div>
      <Combo label="대지 번호" value="1" width="w-[38px]" tall="h-[10px]" />
      <div className="ml-[5px] flex w-[24px] items-center gap-[4px]"><button aria-label="다음"><Tri dir="r" /></button><button aria-label="마지막"><Tri dir="r" bar /></button></div>
      <span className="w-[133px] border-l border-[#3a3a3a] text-center">선택</span>
      <button aria-label="상태 메뉴" className="flex w-[12px] justify-center"><Tri dir="r" /></button>
      <div className="flex flex-1 items-center self-stretch bg-[#333]">
        <button aria-label="왼쪽으로" className="flex w-[12px] justify-center"><Tri dir="l" /></button>
        <div className="flex flex-1 justify-center self-stretch pl-[52px]"><span className="w-[10px] bg-[#8a8a8a]" /></div>
        <button aria-label="오른쪽으로" className="flex w-[12px] justify-center"><Tri dir="r" /></button>
      </div>
      <span className="w-[11px] self-stretch bg-[#4a4a4a]" />
    </div>
  );
}

function Workspace() {
  return (
    <main className="relative flex min-w-0 flex-1 flex-col">
      <div className="flex h-[14px] shrink-0 bg-[#2f2f2f]">
        <div className="flex items-center gap-[12px] whitespace-nowrap border-r border-[#222] bg-[#484848] pl-[6px] pr-[5px] text-[8px] leading-none text-[#dcdcdc]">
          무제-1 @ 50% (RGB/미리보기)
          <button aria-label="문서 닫기"><Svg w={4} h={4} box="0 0 4 4"><path d="M.3.3l3.400 3.400M3.700.3L.3 3.700" stroke="#ddd" /></Svg></button>
        </div>
      </div>
      <div className="flex min-h-0 flex-1">
        <div className="min-w-0 flex-1 overflow-hidden border-t border-[#6a6a6a] bg-[#5e5e5e] pl-[162px] pt-[144px]">
          <div className="grid grid-cols-[281px_281px] grid-rows-[199px_199px] gap-x-[14px] gap-y-[13px]">
            <div className="border border-black bg-white" />
            <div className="bg-white" />
            <div className="bg-white" />
            <div className="bg-white" />
          </div>
        </div>
        <div className="flex w-[11px] shrink-0 flex-col items-center justify-end bg-[#333] pb-[5px]">
          <Caret />
        </div>
      </div>
      <StatusBar />
      <div className="absolute right-0 top-[13px] flex items-start">
        <LeftPanels />
        <RightPanels />
      </div>
    </main>
  );
}

/* ---------- task bar ---------- */

function TaskItem({ label, running, active, children }) {
  return (
    <button aria-label={label} className={`flex h-full w-[33px] flex-col items-center ${active ? "bg-[#484848]" : ""}`}>
      <span className="flex flex-1 items-center">{children}</span>
      <span className={`h-[2px] ${active ? "w-full" : "w-[27px]"} ${running ? "bg-[#76b9ed]" : ""}`} />
    </button>
  );
}

function Taskbar() {
  return (
    <footer className="flex h-[27px] shrink-0 items-center bg-[#191919] text-white">
      <button aria-label="시작" className="flex w-[32px] justify-center">
        <Svg w={12} h={12} box="0 0 12 12"><path d="M0 1.700L5 1v4.700H0zM5.600.9L12 0v5.700H5.600zM0 6.300h5V11l-5-.7zM5.600 6.300H12V12l-6.400-.9z" fill="#fff" stroke="none" /></Svg>
      </button>
      <label className="flex h-full w-[229px] items-center gap-[7px] border-b border-[#cfcfcf] bg-[#f2f2f2] pl-[8px] text-[#222]">
        <Svg w={12} h={12} box="0 0 12 12"><circle cx="7.500" cy="4.500" r="3.700" /><path d="M4.700 7.300L.8 11.200" /></Svg>
        <input aria-label="검색" placeholder="검색하려면 여기에 입력하십시오." className="min-w-0 flex-1 bg-transparent text-[11px] leading-none outline-none placeholder:text-[#333]" />
      </label>
      <TaskItem label="작업 보기"><Svg w={12} h={11} box="0 0 12 11"><path d="M1.500 3h6v5h-6zM1.500 0v1.500h6V0M1.500 11V9.500h6V11M10.500 0v2M10.500 6v5" /><path d="M9.800 3h1.700v2H9.800z" {...F} /></Svg></TaskItem>
      <TaskItem label="Chrome" running>
        <Svg w={16} h={16} box="0 0 16 16">
          <g stroke="none">
            <path d="M8 8L1.070 4A8 8 0 0 1 14.930 4z" fill="#ea4335" />
            <path d="M8 8L14.930 4A8 8 0 0 1 8 16z" fill="#fbbc05" />
            <path d="M8 8V16A8 8 0 0 1 1.070 4z" fill="#34a853" />
            <path d="M8 4.400h6.900L11 10l-3 6z" fill="#fbbc05" />
            <circle cx="8" cy="8" r="3.700" fill="#fff" /><circle cx="8" cy="8" r="2.900" fill="#4285f4" />
          </g>
        </Svg>
      </TaskItem>
      <TaskItem label="NVIDIA">
        <Svg w={12} h={9} box="0 0 12 9"><path d="M4.500 0H12v9H4.500z" fill="#76b900" stroke="none" /><path d="M.5 4.500C3 .8 7.500.8 9.800 4.300 8 7.700 3 8.500.5 4.500z" stroke="#76b900" fill="#1f3300" /><path d="M2.800 4.500C4 2.800 6.500 2.800 7.700 4.500 6.300 6.300 4 6.300 2.800 4.500z" stroke="#8fd400" /></Svg>
      </TaskItem>
      <TaskItem label="Illustrator" running active><span className="flex h-[14px] w-[14px] items-center justify-center border border-[#ff9a00] bg-[#2b1600] text-[9px] font-bold leading-none text-[#ffab2e]">Ai</span></TaskItem>
      <TaskItem label="Photoshop"><span className="flex h-[14px] w-[14px] items-center justify-center border border-[#8bb9f0] bg-[#0b1550] text-[8px] font-bold leading-none text-[#9fc8f5]">Ps</span></TaskItem>
      <TaskItem label="캡처 도구" running>
        <Svg w={16} h={16} box="0 0 16 16"><ellipse cx="8" cy="5.500" rx="6.500" ry="3.700" transform="rotate(-18 8 5.500)" fill="#f1f1f1" stroke="#c9302c" /><path d="M3 12l5-3.500" stroke="#ddd" strokeWidth="1.500" /><path d="M8 8l5 5M13.500 8L9 13" stroke="#3aa0dc" strokeWidth="1.300" /><circle cx="9" cy="13.700" r="1.500" stroke="#3aa0dc" /><circle cx="13.800" cy="12.500" r="1.500" stroke="#3aa0dc" /></Svg>
      </TaskItem>
      <TaskItem label="원형 앱"><span className="flex h-[16px] w-[16px] items-center justify-center bg-[#0a7be0]"><Svg w={11} h={11} box="0 0 11 11"><circle cx="5.500" cy="5.500" r="4.500" stroke="#cfe6ff" /><circle cx="5.500" cy="5.500" r="2" stroke="#fff" /></Svg></span></TaskItem>
      <div className="ml-auto flex h-full items-center">
        <button aria-label="숨겨진 아이콘" className="flex w-[16px] justify-center"><Svg w={9} h={6} box="0 0 9 6"><path d="M1 5l3.500-3.500L8 5" /></Svg></button>
        <button aria-label="OneDrive" className="flex w-[16px] justify-center"><Svg w={11} h={8} box="0 0 11 8"><path d="M2.500 7.500C-.5 7.500 0 3.800 2.500 4 3 .8 7.500.5 8 3.500c3.500 0 3.500 4 1 4z" fill="#f0f0f0" stroke="none" /></Svg></button>
        <button aria-label="네트워크" className="flex w-[16px] justify-center"><Svg w={11} h={11} box="0 0 11 11"><path d="M4 2.500h6.500v5H3.500V5M7 7.500V10M5 10h4M.5 1h3v3h-3zM2 4v5" /></Svg></button>
        <button aria-label="볼륨" className="flex w-[16px] justify-center"><Svg w={12} h={10} box="0 0 12 10"><path d="M.5 3.500h2L5 1v8L2.500 6.500h-2zM6.500 3.500c.8 1 .8 2 0 3M8.300 2c1.500 2 1.500 4 0 6M10 .8c2 2.700 2 5.700 0 8.400" strokeWidth=".9" /></Svg></button>
        <button aria-label="입력 언어" className="w-[14px] text-[12px] leading-none">A</button>
        <div className="ml-[4px] flex w-[46px] flex-col items-center gap-[3px] whitespace-nowrap text-[9px] leading-[9px]"><span>오후 5:22</span><span>2020-06-23</span></div>
        <button aria-label="알림" className="relative ml-[12px] mr-[5px] h-[16px] w-[18px]">
          <Svg w={12} h={11} box="0 0 12 11"><path d="M0 0h12v9H5l-2.500 2V9H0z" fill="#f0f0f0" stroke="none" /><path d="M2 2.500h8M2 4.500h8M2 6.500h5" stroke="#222" /></Svg>
          <span className="absolute bottom-0 right-0 flex h-[12px] w-[12px] items-center justify-center rounded-full border border-[#aaa] bg-[#333] text-[8px] leading-none">15</span>
        </button>
        <span className="h-full w-px bg-[#555]" />
        <span className="w-[3px]" />
      </div>
    </footer>
  );
}

export default function App() {
  return (
    <div className={`flex h-screen flex-col overflow-hidden bg-[#484848] ${FONT}`}>
      <MenuBar />
      <ControlBar />
      <div className="flex min-h-0 flex-1">
        <Toolbar />
        <Workspace />
      </div>
      <Taskbar />
    </div>
  );
}
